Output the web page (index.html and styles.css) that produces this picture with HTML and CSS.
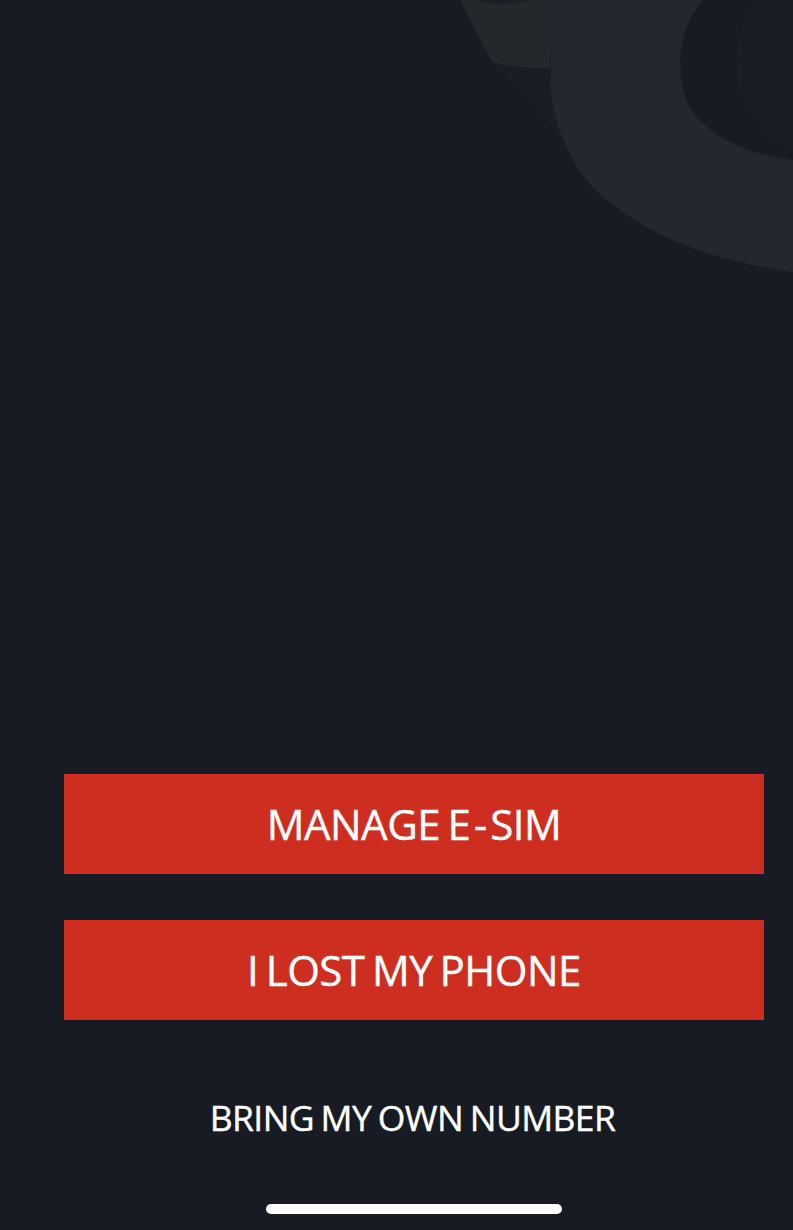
FILE: index.html
```html
<!DOCTYPE html>
<html lang="en">
<head>
<meta charset="utf-8">
<title>Manage E-SIM</title>
<link rel="stylesheet" href="styles.css">
</head>
<body>
<svg class="art" viewBox="0 0 353 290" width="353" height="290" aria-hidden="true">
  <path class="art-shade" d="M52 62 L110 68 L112 100 Q116 120 124 140 Q85 100 52 62Z"/>
  <path class="art-left" d="M20 0 L52 62 Q75 69 110 68 L112 0Z"/>
  <path class="art-spot" d="M37 0 Q62 9 90 0Z"/>
  <path class="art-main" d="M110 0 L111 90 C114 130 135 175 167 200 C215 240 280 262 353 272 L353 160 C320 156 285 145 263 123 C234 98 231 35 263 0Z"/>
  <path class="art-inner" d="M353 150 C335 145 330 140 317 123 C290 95 290 35 313 0 L353 0Z"/>
</svg>
<main class="actions">
  <a class="btn" href="#">MANAGE E<span class="dash">-</span>SIM</a>
  <a class="btn" href="#">I LOST MY PHONE</a>
  <a class="link" href="#">BRING MY OWN NUMBER</a>
</main>
<div class="home-bar"></div>
</body>
</html>
```
FILE: styles.css
```css
* { box-sizing: border-box; }
html, body { margin: 0; height: 100%; }
body {
  position: relative;
  height: 1230px;
  overflow: hidden;
  background: #171b23;
  font-family: "Open Sans", "Noto Sans", sans-serif;
  color: #fff;
  display: flex;
  flex-direction: column;
}
.art { position: absolute; top: 0; right: 0; }
.art-main { fill: #23272f; }
.art-left { fill: #23282b; }
.art-spot { fill: #1b1f26; }
.art-shade { fill: #191d25; }
.art-inner { fill: #191d25; }
.actions {
  margin: 774px 29px 0 64px;
  display: flex;
  flex-direction: column;
  gap: 46px;
  position: relative;
}
.btn {
  height: 100px;
  padding-bottom: 2px;
  background: #cd2e20;
  color: #fff;
  text-decoration: none;
  display: flex;
  align-items: center;
  justify-content: center;
  white-space: pre;
  font-size: 42px;
  letter-spacing: -0.5px;
  word-spacing: -3px;
  -webkit-text-stroke: 0.4px #fff;
}
.dash { margin: 0 3.5px; }
.link {
  height: 50px;
  margin-top: 26px;
  padding-right: 3px;
  color: #fff;
  text-decoration: none;
  display: flex;
  align-items: center;
  justify-content: center;
  font-size: 35.5px;
  letter-spacing: -0.6px;
  word-spacing: -2px;
  -webkit-text-stroke: 0.4px #fff;
}
.home-bar {
  width: 296px;
  height: 10px;
  border-radius: 5px;
  background: #fff;
  margin: 62px 0 0 266px;
  position: relative;
}
```
